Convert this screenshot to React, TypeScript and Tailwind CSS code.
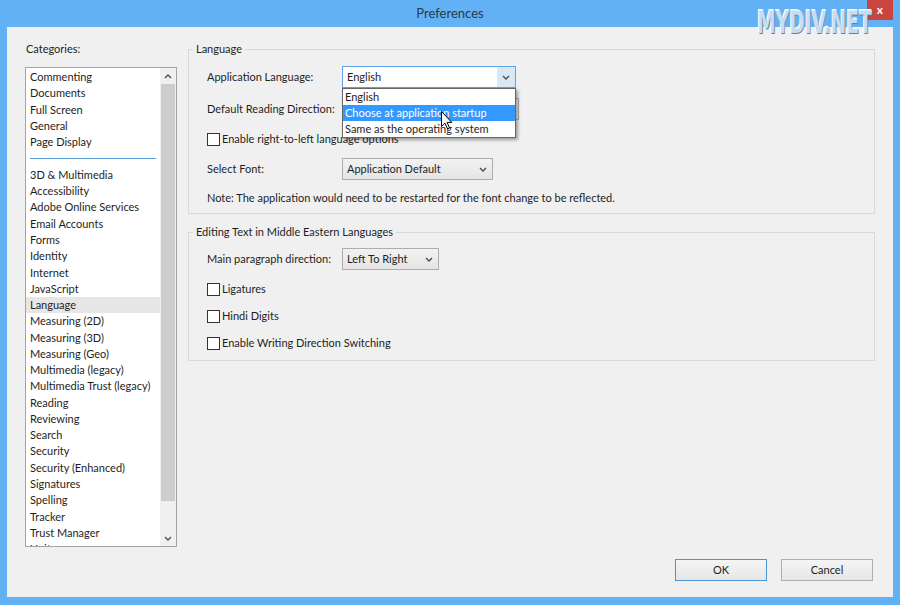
const categories: (string | null)[] = [
  'Commenting',
  'Documents',
  'Full Screen',
  'General',
  'Page Display',
  null,
  '3D & Multimedia',
  'Accessibility',
  'Adobe Online Services',
  'Email Accounts',
  'Forms',
  'Identity',
  'Internet',
  'JavaScript',
  'Language',
  'Measuring (2D)',
  'Measuring (3D)',
  'Measuring (Geo)',
  'Multimedia (legacy)',
  'Multimedia Trust (legacy)',
  'Reading',
  'Reviewing',
  'Search',
  'Security',
  'Security (Enhanced)',
  'Signatures',
  'Spelling',
  'Tracker',
  'Trust Manager',
  'Units',
];

function Chevron({ up = false }: { up?: boolean }) {
  return (
    <svg width="8" height="5" viewBox="0 0 8 5" className="block">
      <path
        d={up ? 'M1 4 L4 1 L7 4' : 'M1 1 L4 4 L7 1'}
        stroke="#4a4a4a"
        strokeWidth="1.3"
        fill="none"
      />
    </svg>
  );
}

function Combo({ value, width }: { value: string; width: string }) {
  return (
    <div
      className={`${width} h-[22px] flex items-center border border-[#adadad] bg-gradient-to-b from-[#f2f2f2] to-[#e5e5e5]`}
    >
      <span className="flex-1 pl-[4px] whitespace-nowrap overflow-hidden">{value}</span>
      <span className="w-[18px] flex justify-center">
        <Chevron />
      </span>
    </div>
  );
}

function Checkbox({ label }: { label: string }) {
  return (
    <label className="h-[18px] flex items-center gap-[2px]">
      <span className="w-[13px] h-[13px] border border-[#333] bg-white" />
      <span>{label}</span>
    </label>
  );
}

function Cursor() {
  return (
    <svg width="12" height="19" viewBox="0 0 12 19" className="block">
      <path
        d="M0.5 0.5 L0.5 15.5 L4 12.2 L6.6 18 L8.6 17.1 L6.1 11.4 L10.8 11.4 Z"
        fill="#fff"
        stroke="#000"
        strokeWidth="1"
        strokeLinejoin="round"
      />
    </svg>
  );
}

export default function App() {
  return (
    <div className="w-[900px] h-[605px] bg-[#62b1f4] flex flex-col relative text-[11px] text-[#1e1e1e] font-['Lato',sans-serif]">
      {/* Title bar */}
      <div className="h-[27px] flex items-center justify-center relative">
        <span className="text-[13px] text-[#2c3a47]">Preferences</span>
        <button className="absolute right-[7px] top-0 w-[26px] h-[20px] bg-[#c9453d] text-white text-[12px] font-bold leading-[18px] flex items-center justify-center">
          x
        </button>
      </div>

      {/* Watermark */}
      <div className="absolute left-[757px] top-[6px] text-[32px] leading-none font-bold font-['DejaVu_Sans_Condensed',sans-serif] text-[#d4eafd]/90 origin-left scale-x-[0.65] [text-shadow:1px_1px_0_#6b7f92,-1px_-1px_0_#ffffff] pointer-events-none z-20 whitespace-nowrap">
        MYDIV.NET
      </div>

      {/* Client area */}
      <div className="flex-1 mx-[7px] mb-[8px] bg-[#f0f0f0] flex flex-col px-[18px] pt-[14px] pb-[16px]">
        <div className="flex gap-[11px]">
          {/* Categories */}
          <div className="w-[152px] shrink-0">
            <div className="h-[16px] leading-[16px] pl-[1px]">Categories:</div>
            <div className="mt-[10px] h-[480px] border border-[#a3a3a3] bg-white flex">
              <div className="flex-1 overflow-hidden pt-[1px]">
                {categories.map((c, i) =>
                  c === null ? (
                    <div key={i} className="h-[16.6px] flex items-center pl-[4px]">
                      <div className="w-[126px] h-px bg-[#5b9fd8]" />
                    </div>
                  ) : (
                    <div
                      key={i}
                      className={`h-[16.27px] leading-[16.27px] pl-[4px] whitespace-nowrap ${
                        c === 'Language' ? 'bg-[#e6e6e6]' : ''
                      }`}
                    >
                      {c}
                    </div>
                  )
                )}
              </div>
              <div className="w-[16px] bg-[#f0f0f0] flex flex-col">
                <div className="h-[16px] flex items-center justify-center">
                  <Chevron up />
                </div>
                <div className="h-[417px] mx-[1px] bg-[#cdcdcd]" />
                <div className="flex-1" />
                <div className="h-[16px] flex items-center justify-center">
                  <Chevron />
                </div>
              </div>
            </div>
          </div>

          {/* Settings */}
          <div className="flex-1 flex flex-col">
            <fieldset className="border border-[#d9d9d9]">
              <legend className="ml-[4px] px-[3px] leading-[16px]">Language</legend>
              <div className="pl-[18px] pt-[9px] pb-[7px] flex flex-col gap-[10px]">
                <div className="h-[22px] flex items-center">
                  <span className="w-[135px]">Application Language:</span>
                  <div className="relative z-10">
                    <div className="w-[174px] h-[22px] flex items-center border border-[#5ea3e6] bg-white">
                      <span className="flex-1 pl-[4px]">English</span>
                      <span className="w-[18px] h-full bg-[#dae7f4] flex items-center justify-center">
                        <Chevron />
                      </span>
                    </div>
                    <div className="absolute left-0 top-full w-[174px] border border-[#666] bg-white shadow-[2px_2px_3px_rgba(0,0,0,0.35)]">
                      <div className="h-[16px] leading-[16px] pl-[2px]">English</div>
                      <div className="h-[16px] leading-[16px] pl-[2px] bg-[#3399ff] text-white">
                        Choose at application startup
                      </div>
                      <div className="h-[16px] leading-[16px] pl-[2px]">Same as the operating system</div>
                    </div>
                  </div>
                </div>
                <div className="h-[22px] flex items-center">
                  <span className="w-[135px]">Default Reading Direction:</span>
                  <Combo value="" width="w-[177px]" />
                </div>
                <Checkbox label="Enable right-to-left language options" />
                <div className="h-[22px] flex items-center">
                  <span className="w-[135px]">Select Font:</span>
                  <Combo value="Application Default" width="w-[151px]" />
                </div>
                <div className="h-[16px] leading-[16px]">
                  Note: The application would need to be restarted for the font change to be reflected.
                </div>
              </div>
            </fieldset>

            <fieldset className="mt-[10px] border border-[#d9d9d9]">
              <legend className="ml-[4px] px-[3px] leading-[16px]">Editing Text in Middle Eastern Languages</legend>
              <div className="pl-[18px] pt-[8px] pb-[8px] flex flex-col gap-[9px]">
                <div className="h-[22px] flex items-center mb-[1px]">
                  <span className="w-[135px]">Main paragraph direction:</span>
                  <Combo value="Left To Right" width="w-[97px]" />
                </div>
                <Checkbox label="Ligatures" />
                <Checkbox label="Hindi Digits" />
                <Checkbox label="Enable Writing Direction Switching" />
              </div>
            </fieldset>
          </div>
        </div>

        {/* Buttons */}
        <div className="mt-auto flex justify-end gap-[14px] mr-[2px]">
          <button className="w-[92px] h-[22px] border border-[#4a93d4] bg-gradient-to-b from-[#f5f5f5] to-[#e6e6e6]">
            OK
          </button>
          <button className="w-[92px] h-[22px] border border-[#adadad] bg-gradient-to-b from-[#f5f5f5] to-[#e6e6e6]">
            Cancel
          </button>
        </div>
      </div>

      {/* Mouse pointer */}
      <div className="absolute left-[441px] top-[111px] z-30 pointer-events-none">
        <Cursor />
      </div>
    </div>
  );
}
